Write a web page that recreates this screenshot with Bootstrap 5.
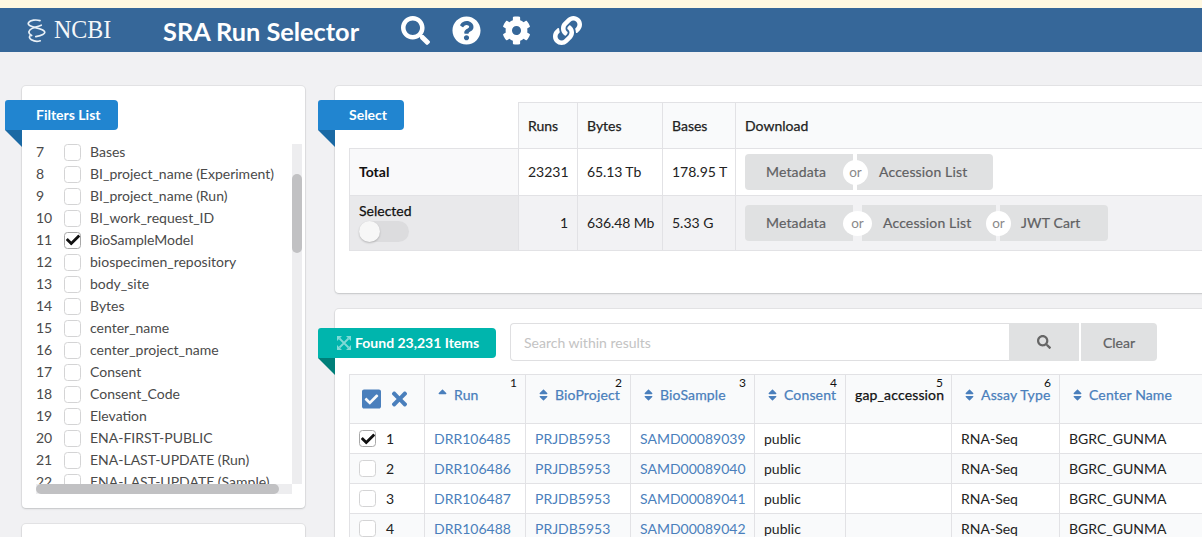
<!DOCTYPE html>
<html lang="en">
<head>
<meta charset="utf-8">
<title>SRA Run Selector</title>
<link rel="stylesheet" href="https://cdn.jsdelivr.net/npm/bootstrap@5.3.0/dist/css/bootstrap.min.css">
<style>
html,body{height:537px;overflow:hidden}
body{background:#f1f1f3;font-family:Lato,"Liberation Sans",sans-serif;font-size:14px;color:#2b2b2b;line-height:18px}
.top-strip{height:8px;background:#fff8e1}
.sra-bar{height:44px;background:#366799;padding:0;flex-wrap:nowrap;justify-content:flex-start}
.ncbi-logo{margin-left:27px;width:136px;color:#fff}
.ncbi-logo svg{flex:none;margin-top:2px}
.ncbi-word{font-family:"Liberation Serif",serif;font-size:25px;line-height:27px;display:inline-block;width:58px;transform:scaleX(.96);transform-origin:left center;margin-left:8px;margin-top:-2px;opacity:.95}
.sra-title{font-size:25.3px;font-weight:700;color:#fff;line-height:44px;width:238px;padding:2px 0 0;white-space:nowrap}
.nav-ic{width:29px;height:29px;fill:#fff;margin-right:21.67px;display:block}
.page-wrap{padding:34px 0 0 22px;gap:30px;width:1300px}
.left-side{width:283px;flex:none;gap:16px}
.right-side{width:900px;flex:none;gap:16px}
.panel{background:#fff;border:0;border-radius:4px;box-shadow:0 0 0 1px rgba(34,36,38,.06),0 1px 2px rgba(34,36,38,.16);position:relative}
.flag{position:absolute;left:-17px;top:14px;background:#2185d0;color:#fff;font-weight:700;height:30px;line-height:30px;border-radius:3px 4px 4px 0;white-space:nowrap;padding:0 17px 0 31px}
.flag::after{content:"";position:absolute;left:0;top:30px;border-top:17px solid #1a69a4;border-left:17px solid transparent}
.flag-teal{background:#00b5ad;top:19px;padding:0 17px 0 37px}
.flag-teal::after{border-top-color:#007f79}
.flag-teal svg{position:absolute;left:19px;top:8px;width:14px;height:14px}
.filter-panel{height:422px}
.filter-box{position:absolute;left:14px;top:58px;width:266px;height:350px;overflow:hidden}
.filter-rows{margin:-3px 0 0;padding:0;list-style:none;width:256px}
.filter-rows li{height:22px;display:flex;align-items:center;color:#4a4a4a;white-space:nowrap}
.filter-rows .nr{width:28px;flex:none}
.sq{width:17px;height:17px;margin:0;flex:none;border:1px solid #d4d4d5;border-radius:4px;background-color:#fff;box-shadow:none}
.sq:checked{background-color:#fff;border-color:#a8a8a8;background-size:14px;background-image:url("data:image/svg+xml,%3Csvg xmlns='http://www.w3.org/2000/svg' viewBox='0 0 512 512'%3E%3Cpath fill='%23111' d='M173.898 439.404l-166.4-166.4c-9.997-9.997-9.997-26.206 0-36.204l36.203-36.204c9.997-9.998 26.207-9.998 36.204 0L192 312.69 432.095 72.596c9.997-9.997 26.207-9.997 36.204 0l36.203 36.204c9.997 9.997 9.997 26.206 0 36.204l-294.4 294.401c-9.998 9.997-26.207 9.997-36.204-.001z'/%3E%3C/svg%3E")}
.filter-rows label{margin-left:9px}
.track-v{position:absolute;right:0;top:0;width:10px;height:340px;background:#ededef}
.thumb-v{position:absolute;left:0;top:30px;width:10px;height:79px;background:#c1c1c3;border-radius:5px}
.track-h{position:absolute;left:0;top:340px;width:256px;height:10px;background:#ededef}
.thumb-h{position:absolute;left:0;top:0;width:243px;height:10px;background:#c1c1c3;border-radius:5px}
.select-panel{height:207px;padding:16px 0 0 14px}
.sum-table{table-layout:fixed;width:886px;margin:0;border-collapse:collapse}
.sum-table td,.sum-table th{border:1px solid #e2e2e5;padding:0 9px;vertical-align:middle;box-shadow:none;background:transparent;color:#222;line-height:18px;white-space:nowrap}
.sum-table thead th{height:46px;background:#f9fafb;font-weight:400;-webkit-text-stroke:.25px currentColor}
.sum-table thead th.blank{background:transparent;border:0;border-bottom:1px solid #e2e2e5}
.sum-table tbody tr:first-child td{height:47px}
.sum-table tbody tr:last-child td{height:55px;background:#f2f2f4}
.sum-table tbody td:nth-child(3){letter-spacing:-.1px}
.sum-table tbody th{background:#f9f9fa;font-weight:700;color:#111}
.sum-table tbody tr:last-child th{background:#e9e9eb;font-weight:400;-webkit-text-stroke:.25px currentColor;vertical-align:top;padding-top:6px}
.switcher{display:block;width:50px;height:21px;border-radius:11px;background:#dcdcde;position:relative;margin-top:1px}
.switcher::after{content:"";position:absolute;left:0;top:0;width:21px;height:21px;border-radius:50%;background:#f7f7f7;box-shadow:0 1px 2px rgba(0,0,0,.22)}
.grp{display:inline-flex;vertical-align:middle}
.grp .btn{height:36px;background:#e0e1e2;border:0;color:#5f6062;font-weight:400;-webkit-text-stroke:.2px currentColor;letter-spacing:.15px;font-size:14px;padding:0 0 0 21px;border-radius:0;line-height:36px;text-align:left;white-space:nowrap}
.grp .btn:first-child{border-radius:4px 0 0 4px}
.grp .btn:last-child{border-radius:0 4px 4px 0}
.grp .wd-108{width:108px}
.grp .wd-136{width:136px;padding-left:22px}
.grp .wd-134{width:134px}
.orx{width:4px;position:relative;flex:none}
.orx.wide{width:9px}
.orx span{position:absolute;left:-10px;top:6px;width:25px;height:25px;border-radius:50%;background:#fff;color:#8a8a8a;text-align:center;line-height:25px;font-size:13.5px;z-index:2}
.orx.wide span{width:29px}
.results-panel{height:300px;padding:14px 0 0 14px}
.search-row{margin-left:161px;height:38px}
.search-row .form-control{width:499px;flex:none;height:38px;border:1px solid #dfdfe1;border-right:0;border-radius:4px 0 0 4px;font-size:14px;padding:0 13px;color:#333;box-shadow:none;font-family:inherit}
.search-row .form-control::placeholder{color:#c3c3c3}
.search-row .go{width:70px;height:38px;background:#e0e1e2;border:0;border-radius:0;padding:0;display:flex;align-items:center;justify-content:center;margin-left:0!important}
.search-row .go svg{width:14px;height:14px;fill:#666}
.search-row .clr{width:76px;height:38px;margin-left:2px!important;background:#e0e1e2;border:0;border-radius:0 4px 4px 0;color:#5f6062;font-size:14px;-webkit-text-stroke:.2px currentColor;padding:0}
.run-table{table-layout:fixed;width:886px;margin:13px 0 0;border-collapse:collapse}
.run-table th,.run-table td{border:1px solid #e2e2e5;padding:0 9px;box-shadow:none;background:transparent;color:#222;height:30px;line-height:18px;white-space:nowrap;vertical-align:middle}
.run-table thead th{height:49px;vertical-align:top;padding:11px 0 0 13px;background:#f9fafb;position:relative;font-weight:400;-webkit-text-stroke:.25px currentColor;letter-spacing:.15px}
.run-table thead th a{color:#4a7fbc;text-decoration:none}
.run-table thead th.plain{padding-left:9px;color:#111}
.run-table thead th.box{padding:13px 0 0 12px}
.run-table tbody tr:nth-child(even) td{background:#f9fafb}
.run-table tbody a{color:#4a7fbc;text-decoration:none}
.sort-ic{width:9px;height:14px;fill:#4a7fbc;margin:-2px 7px 0 0;vertical-align:middle;display:inline-block}
.num-tag{position:absolute;right:8px;top:0;font-size:12px;line-height:16px;color:#111;font-weight:400;-webkit-text-stroke:0;letter-spacing:0}
.head-a{width:19px;height:22px;fill:#4a7fbc;margin-right:10px;display:inline-block;vertical-align:top}
.head-b{width:17px;height:22px;fill:#4a7fbc;display:inline-block;vertical-align:top}
.cell-flex{display:flex;align-items:center;gap:10px}
</style>
</head>
<body>
<svg width="0" height="0" class="position-absolute" aria-hidden="true">
<symbol id="i-search" viewBox="0 0 512 512"><path d="M505 442.7L405.3 343c-4.5-4.5-10.6-7-17-7H372c27.6-35.3 44-79.7 44-128C416 93.1 322.9 0 208 0S0 93.1 0 208s93.1 208 208 208c48.3 0 92.7-16.4 128-44v16.3c0 6.4 2.5 12.5 7 17l99.7 99.7c9.4 9.4 24.6 9.4 33.9 0l28.3-28.3c9.4-9.4 9.4-24.6.1-34zM208 336c-70.7 0-128-57.2-128-128 0-70.7 57.2-128 128-128 70.7 0 128 57.2 128 128 0 70.7-57.2 128-128 128z"/></symbol>
<symbol id="i-help" viewBox="0 0 512 512"><path d="M504 256c0 136.997-111.043 248-248 248S8 392.997 8 256C8 119.083 119.043 8 256 8s248 111.083 248 248zM262.655 90c-54.497 0-89.255 22.957-116.549 63.758-3.536 5.286-2.353 12.415 2.715 16.258l34.699 26.31c5.205 3.947 12.621 3.008 16.665-2.122 17.864-22.658 30.113-35.797 57.303-35.797 20.429 0 45.698 13.148 45.698 32.958 0 14.976-12.363 22.667-32.534 33.976C247.128 238.528 216 254.941 216 296v4c0 6.627 5.373 12 12 12h56c6.627 0 12-5.373 12-12v-1.333c0-28.462 83.186-29.647 83.186-106.667 0-58.002-60.165-102-116.531-102zM256 338c-25.365 0-46 20.635-46 46 0 25.364 20.635 46 46 46s46-20.636 46-46c0-25.365-20.635-46-46-46z"/></symbol>
<symbol id="i-cog" viewBox="0 0 512 512"><path d="M487.4 315.7l-42.6-24.6c4.3-23.2 4.3-47 0-70.2l42.6-24.6c4.9-2.8 7.1-8.6 5.5-14-11.1-35.6-30-67.8-54.7-94.6-3.8-4.1-10-5.1-14.8-2.3L380.8 110c-17.9-15.4-38.5-27.3-60.8-35.1V25.8c0-5.6-3.9-10.5-9.4-11.7-36.7-8.2-74.3-7.8-109.2 0-5.5 1.2-9.4 6.1-9.4 11.7V75c-22.2 7.9-42.8 19.8-60.8 35.1L88.7 85.5c-4.9-2.8-11-1.9-14.8 2.3-24.7 26.7-43.6 58.9-54.7 94.6-1.7 5.4.6 11.2 5.5 14L67.3 221c-4.3 23.2-4.3 47 0 70.2l-42.6 24.6c-4.9 2.8-7.1 8.6-5.5 14 11.1 35.6 30 67.8 54.7 94.6 3.8 4.1 10 5.1 14.8 2.3l42.6-24.6c17.9 15.4 38.5 27.3 60.8 35.1v49.2c0 5.6 3.9 10.5 9.4 11.7 36.7 8.2 74.3 7.8 109.2 0 5.5-1.2 9.4-6.1 9.4-11.7v-49.2c22.2-7.9 42.8-19.8 60.8-35.1l42.6 24.6c4.9 2.8 11 1.9 14.8-2.3 24.7-26.7 43.6-58.9 54.7-94.6 1.5-5.5-.7-11.3-5.6-14.1zM256 336c-44.1 0-80-35.9-80-80s35.9-80 80-80 80 35.9 80 80-35.9 80-80 80z"/></symbol>
<symbol id="i-link" viewBox="0 0 512 512"><path d="M326.612 185.391c59.747 59.809 58.927 155.698.36 214.59-.11.12-.24.25-.36.37l-67.2 67.2c-59.27 59.27-155.699 59.262-214.96 0-59.27-59.26-59.27-155.7 0-214.96l37.106-37.106c9.84-9.84 26.786-3.3 27.294 10.606.648 17.722 3.826 35.527 9.69 52.721 1.986 5.822.567 12.262-3.783 16.612l-13.087 13.087c-28.026 28.026-28.905 73.66-1.155 101.96 28.024 28.579 74.086 28.749 102.325.51l67.2-67.19c28.191-28.191 28.073-73.757 0-101.83-3.701-3.694-7.429-6.564-10.341-8.569a16.037 16.037 0 0 1-6.947-12.606c-.396-10.567 3.348-21.456 11.698-29.806l21.054-21.055c5.521-5.521 14.182-6.199 20.584-1.731a152.482 152.482 0 0 1 20.522 17.197zM467.547 44.449c-59.261-59.262-155.69-59.27-214.96 0l-67.2 67.2c-.12.12-.25.25-.36.37-58.566 58.892-59.387 154.781.36 214.59a152.454 152.454 0 0 0 20.521 17.196c6.402 4.468 15.064 3.789 20.584-1.731l21.054-21.055c8.35-8.35 12.094-19.239 11.698-29.806a16.037 16.037 0 0 0-6.947-12.606c-2.912-2.005-6.64-4.875-10.341-8.569-28.073-28.073-28.191-73.639 0-101.83l67.2-67.19c28.239-28.239 74.3-28.069 102.325.51 27.75 28.3 26.872 73.934-1.155 101.96l-13.087 13.087c-4.35 4.35-5.769 10.79-3.783 16.612 5.864 17.194 9.042 34.999 9.69 52.721.509 13.906 17.454 20.446 27.294 10.606l37.106-37.106c59.271-59.259 59.271-155.699.001-214.959z"/></symbol>
<symbol id="i-sort" viewBox="0 0 320 512"><path d="M41 288h238c21.4 0 32.1 25.9 17 41L177 448c-9.4 9.4-24.6 9.4-33.9 0L24 329c-15.1-15.1-4.4-41 17-41zm255-105L177 64c-9.4-9.4-24.6-9.4-33.9 0L24 183c-15.1 15.1-4.4 41 17 41h238c21.4 0 32.1-25.9 17-41z"/></symbol>
<symbol id="i-sortup" viewBox="0 0 320 512"><path d="M279 224H41c-21.4 0-32.1-25.9-17-41L143 64c9.4-9.4 24.6-9.4 33.9 0l119 119c15.2 15.1 4.5 41-16.9 41z"/></symbol>
<symbol id="i-chk" viewBox="0 0 448 512"><path d="M400 480H48c-26.51 0-48-21.49-48-48V80c0-26.51 21.49-48 48-48h352c26.51 0 48 21.49 48 48v352c0 26.51-21.49 48-48 48zm-204.686-98.059l184-184c6.248-6.248 6.248-16.379 0-22.627l-22.627-22.627c-6.248-6.248-16.379-6.249-22.628 0L184 302.745l-70.059-70.059c-6.248-6.248-16.379-6.248-22.628 0l-22.627 22.627c-6.248 6.248-6.248 16.379 0 22.627l104 104c6.249 6.25 16.379 6.25 22.628.001z"/></symbol>
<symbol id="i-x" viewBox="0 0 352 512"><path d="M242.72 256l100.07-100.07c12.28-12.28 12.28-32.19 0-44.48l-22.24-22.24c-12.28-12.28-32.19-12.28-44.48 0L176 189.28 75.93 89.21c-12.28-12.28-32.19-12.28-44.48 0L9.21 111.45c-12.28 12.28-12.28 32.19 0 44.48L109.28 256 9.21 356.07c-12.28 12.28-12.28 32.19 0 44.48l22.24 22.24c12.28 12.28 32.2 12.28 44.48 0L176 322.72l100.07 100.07c12.28 12.28 32.2 12.28 44.48 0l22.24-22.24c12.28-12.28 12.28-32.19 0-44.48L242.72 256z"/></symbol>
</svg>

<div class="top-strip"></div>
<nav class="navbar sra-bar">
  <div class="ncbi-logo d-flex align-items-center">
    <svg width="19" height="24" viewBox="0 0 19 24" fill="none" stroke="#eaf1f7" stroke-width="1.7" stroke-linecap="round"><path d="M13 1.6C9 .4 3.4 1 1.6 3.6 .2 6 3.6 7.4 8.4 8.6c4.6 1.1 9.4 2.4 9.4 4.6 0 2.4-5 3.6-9 4.4"/><path d="M14.2 6.2C9.6 8.2 3.6 8.6 2.2 12c-.9 2 .6 3.6 2.4 4.6"/><path d="M3 16.8c-.9 1.2-.6 2.8 1.4 4 2.6 1.5 6.4 1.8 8.8 1"/></svg>
    <span class="ncbi-word">NCBI</span>
  </div>
  <span class="sra-title">SRA Run Selector</span>
  <svg class="nav-ic"><use href="#i-search"/></svg>
  <svg class="nav-ic"><use href="#i-help"/></svg>
  <svg class="nav-ic"><use href="#i-cog"/></svg>
  <svg class="nav-ic"><use href="#i-link"/></svg>
</nav>

<div class="d-flex page-wrap">
  <div class="left-side d-flex flex-column">
    <div class="card panel filter-panel">
      <div class="flag">Filters List</div>
      <div class="filter-box">
        <ul class="filter-rows">
          <li><span class="nr">7</span><input class="form-check-input sq" type="checkbox"><label>Bases</label></li>
          <li><span class="nr">8</span><input class="form-check-input sq" type="checkbox"><label>BI_project_name (Experiment)</label></li>
          <li><span class="nr">9</span><input class="form-check-input sq" type="checkbox"><label>BI_project_name (Run)</label></li>
          <li><span class="nr">10</span><input class="form-check-input sq" type="checkbox"><label>BI_work_request_ID</label></li>
          <li><span class="nr">11</span><input class="form-check-input sq" type="checkbox" checked><label>BioSampleModel</label></li>
          <li><span class="nr">12</span><input class="form-check-input sq" type="checkbox"><label>biospecimen_repository</label></li>
          <li><span class="nr">13</span><input class="form-check-input sq" type="checkbox"><label>body_site</label></li>
          <li><span class="nr">14</span><input class="form-check-input sq" type="checkbox"><label>Bytes</label></li>
          <li><span class="nr">15</span><input class="form-check-input sq" type="checkbox"><label>center_name</label></li>
          <li><span class="nr">16</span><input class="form-check-input sq" type="checkbox"><label>center_project_name</label></li>
          <li><span class="nr">17</span><input class="form-check-input sq" type="checkbox"><label>Consent</label></li>
          <li><span class="nr">18</span><input class="form-check-input sq" type="checkbox"><label>Consent_Code</label></li>
          <li><span class="nr">19</span><input class="form-check-input sq" type="checkbox"><label>Elevation</label></li>
          <li><span class="nr">20</span><input class="form-check-input sq" type="checkbox"><label>ENA-FIRST-PUBLIC</label></li>
          <li><span class="nr">21</span><input class="form-check-input sq" type="checkbox"><label>ENA-LAST-UPDATE (Run)</label></li>
          <li><span class="nr">22</span><input class="form-check-input sq" type="checkbox"><label>ENA-LAST-UPDATE (Sample)</label></li>
        </ul>
        <div class="track-v"><div class="thumb-v"></div></div>
        <div class="track-h"><div class="thumb-h"></div></div>
      </div>
    </div>
    <div class="card panel" style="height:100px"></div>
  </div>

  <div class="right-side d-flex flex-column">
    <div class="card panel select-panel">
      <div class="flag">Select</div>
      <table class="table sum-table">
        <colgroup><col style="width:169px"><col style="width:59px"><col style="width:85px"><col style="width:73px"><col></colgroup>
        <thead><tr><th class="blank"></th><th>Runs</th><th>Bytes</th><th>Bases</th><th>Download</th></tr></thead>
        <tbody>
          <tr>
            <th>Total</th><td>23231</td><td>65.13 Tb</td><td>178.95 T</td>
            <td><div class="grp"><button class="btn wd-108" type="button">Metadata</button><div class="orx"><span>or</span></div><button class="btn wd-136" type="button">Accession List</button></div></td>
          </tr>
          <tr>
            <th>Selected<span class="switcher"></span></th><td class="text-end">1</td><td>636.48 Mb</td><td>5.33 G</td>
            <td><div class="grp"><button class="btn wd-108" type="button">Metadata</button><div class="orx wide"><span>or</span></div><button class="btn wd-134" type="button">Accession List</button><div class="orx"><span>or</span></div><button class="btn wd-108" type="button">JWT Cart</button></div></td>
          </tr>
        </tbody>
      </table>
    </div>

    <div class="card panel results-panel">
      <div class="flag flag-teal"><svg viewBox="0 0 14 14" fill="none" stroke="#7fdad6" stroke-width="1.8"><path d="M2.5 2.5l9 9M11.5 2.5l-9 9"/><path d="M0 0h5L0 5zM14 0H9l5 5zM0 14h5l-5-5zM14 14H9l5-5z" fill="#7fdad6" stroke="none"/></svg>Found 23,231 Items</div>
      <div class="input-group search-row flex-nowrap">
        <input class="form-control" type="text" placeholder="Search within results">
        <button class="btn go" type="button"><svg><use href="#i-search"/></svg></button>
        <button class="btn clr" type="button">Clear</button>
      </div>
      <table class="table run-table">
        <colgroup><col style="width:75px"><col style="width:101px"><col style="width:105px"><col style="width:124px"><col style="width:91px"><col style="width:106px"><col style="width:108px"><col></colgroup>
        <thead>
          <tr>
            <th class="box"><svg class="head-a"><use href="#i-chk"/></svg><svg class="head-b"><use href="#i-x"/></svg></th>
            <th><a href="#"><svg class="sort-ic"><use href="#i-sortup"/></svg>Run</a><span class="num-tag">1</span></th>
            <th><a href="#"><svg class="sort-ic"><use href="#i-sort"/></svg>BioProject</a><span class="num-tag">2</span></th>
            <th><a href="#"><svg class="sort-ic"><use href="#i-sort"/></svg>BioSample</a><span class="num-tag">3</span></th>
            <th><a href="#"><svg class="sort-ic"><use href="#i-sort"/></svg>Consent</a><span class="num-tag">4</span></th>
            <th class="plain">gap_accession<span class="num-tag">5</span></th>
            <th><a href="#"><svg class="sort-ic"><use href="#i-sort"/></svg>Assay Type</a><span class="num-tag">6</span></th>
            <th><a href="#"><svg class="sort-ic"><use href="#i-sort"/></svg>Center Name</a></th>
          </tr>
        </thead>
        <tbody>
          <tr><td><div class="cell-flex"><input class="form-check-input sq" type="checkbox" checked>1</div></td><td><a href="#">DRR106485</a></td><td><a href="#">PRJDB5953</a></td><td><a href="#">SAMD00089039</a></td><td>public</td><td></td><td>RNA-Seq</td><td>BGRC_GUNMA</td></tr>
          <tr><td><div class="cell-flex"><input class="form-check-input sq" type="checkbox">2</div></td><td><a href="#">DRR106486</a></td><td><a href="#">PRJDB5953</a></td><td><a href="#">SAMD00089040</a></td><td>public</td><td></td><td>RNA-Seq</td><td>BGRC_GUNMA</td></tr>
          <tr><td><div class="cell-flex"><input class="form-check-input sq" type="checkbox">3</div></td><td><a href="#">DRR106487</a></td><td><a href="#">PRJDB5953</a></td><td><a href="#">SAMD00089041</a></td><td>public</td><td></td><td>RNA-Seq</td><td>BGRC_GUNMA</td></tr>
          <tr><td><div class="cell-flex"><input class="form-check-input sq" type="checkbox">4</div></td><td><a href="#">DRR106488</a></td><td><a href="#">PRJDB5953</a></td><td><a href="#">SAMD00089042</a></td><td>public</td><td></td><td>RNA-Seq</td><td>BGRC_GUNMA</td></tr>
        </tbody>
      </table>
    </div>
  </div>
</div>
<script src="https://cdn.jsdelivr.net/npm/bootstrap@5.3.0/dist/js/bootstrap.bundle.min.js"></script>
</body>
</html>
